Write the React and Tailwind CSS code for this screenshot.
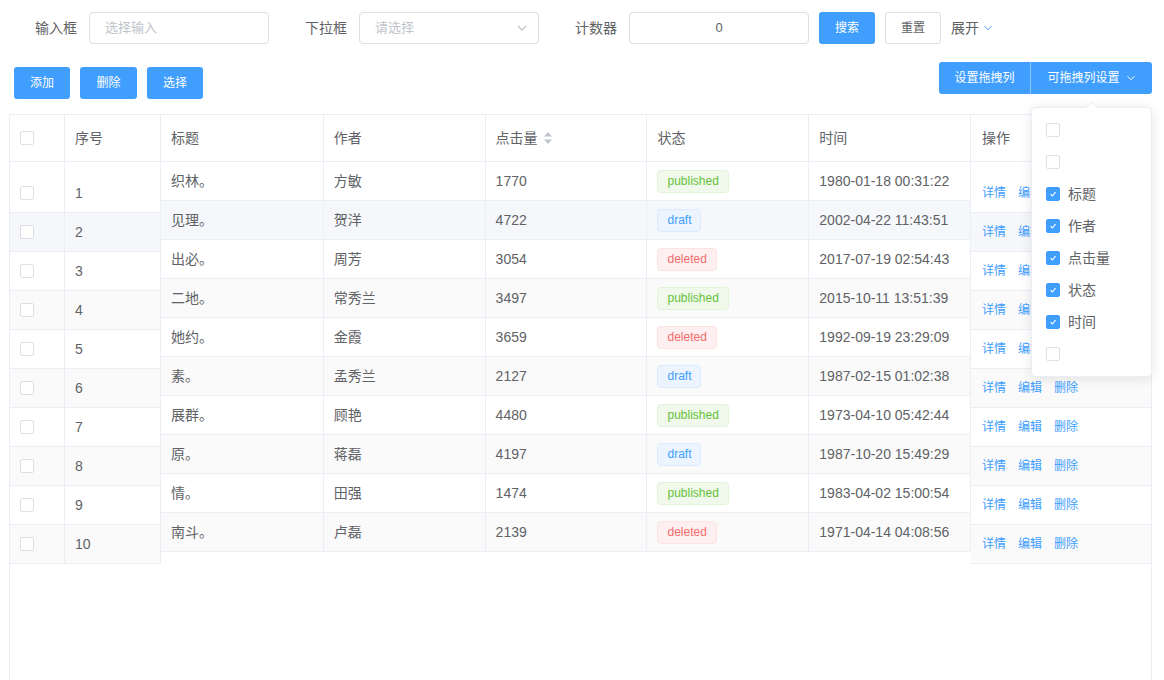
import React from "react";

const rows = [
  { id: 1, title: "织林。", author: "方敏", views: 1770, status: "published", time: "1980-01-18 00:31:22" },
  { id: 2, title: "见理。", author: "贺洋", views: 4722, status: "draft", time: "2002-04-22 11:43:51" },
  { id: 3, title: "出必。", author: "周芳", views: 3054, status: "deleted", time: "2017-07-19 02:54:43" },
  { id: 4, title: "二地。", author: "常秀兰", views: 3497, status: "published", time: "2015-10-11 13:51:39" },
  { id: 5, title: "她约。", author: "金霞", views: 3659, status: "deleted", time: "1992-09-19 23:29:09" },
  { id: 6, title: "素。", author: "孟秀兰", views: 2127, status: "draft", time: "1987-02-15 01:02:38" },
  { id: 7, title: "展群。", author: "顾艳", views: 4480, status: "published", time: "1973-04-10 05:42:44" },
  { id: 8, title: "原。", author: "蒋磊", views: 4197, status: "draft", time: "1987-10-20 15:49:29" },
  { id: 9, title: "情。", author: "田强", views: 1474, status: "published", time: "1983-04-02 15:00:54" },
  { id: 10, title: "南斗。", author: "卢磊", views: 2139, status: "deleted", time: "1971-04-14 04:08:56" },
];

const tagStyles = {
  published: "bg-[#f0f9eb] border-[#e1f3d8] text-[#67c23a]",
  draft: "bg-[#ecf5ff] border-[#d9ecff] text-[#409eff]",
  deleted: "bg-[#fef0f0] border-[#fde2e2] text-[#f56c6c]",
};

const rowBg = (i) => (i === 1 ? "bg-[#f5f7fa]" : i % 2 === 1 ? "bg-[#fafafa]" : "bg-white");

const Check = ({ checked }) =>
  checked ? (
    <span className="inline-flex h-[14px] w-[14px] items-center justify-center rounded-[2px] border border-[#409eff] bg-[#409eff]">
      <svg width="10" height="10" viewBox="0 0 10 10" fill="none">
        <path d="M2.6 5.2 L4.4 7 L7.6 3.2" stroke="white" strokeWidth="1.1" />
      </svg>
    </span>
  ) : (
    <span className="inline-block h-[14px] w-[14px] rounded-[2px] border border-[#dcdfe6] bg-white" />
  );

const Chevron = ({ className }) => (
  <svg className={className} width="10" height="10" viewBox="0 0 10 10" fill="none">
    <path d="M1.5 3.2 L5 6.7 L8.5 3.2" stroke="currentColor" strokeWidth="1" />
  </svg>
);

const Btn = ({ children, className = "" }) => (
  <button className={"h-[32px] rounded-[3px] bg-[#409eff] px-[15px] text-[12px] text-white " + className}>{children}</button>
);

const cell = "flex items-center border-r border-b border-[#ebeef5] px-[10px]";

const SortIcon = () => (
  <svg className="ml-[6px]" width="8" height="14" viewBox="0 0 8 14">
    <path d="M4 1 L8 5.5 L0 5.5 Z" fill="#c0c4cc" />
    <path d="M4 13 L8 8.5 L0 8.5 Z" fill="#c0c4cc" />
  </svg>
);

const Actions = () => (
  <div className="flex gap-[12px] text-[12px] text-[#409eff]">
    <span>详情</span>
    <span>编辑</span>
    <span>删除</span>
  </div>
);

export default function App() {
  return (
    <div className="relative h-[680px] w-[1164px] overflow-hidden bg-white text-[14px] text-[#606266] font-['Liberation_Sans','Noto_Sans_CJK_SC',sans-serif]">
      {/* search form */}
      <div className="flex items-center pt-[12px] pl-[35px]">
        <span>输入框</span>
        <div className="ml-[12px] flex h-[32px] w-[180px] items-center rounded-[4px] border border-[#dcdfe6] px-[15px] text-[13px] text-[#c0c4cc]">选择输入</div>
        <span className="ml-[36px]">下拉框</span>
        <div className="ml-[12px] flex h-[32px] w-[180px] items-center justify-between rounded-[4px] border border-[#dcdfe6] pl-[15px] pr-[10px] text-[13px] text-[#c0c4cc]">
          请选择
          <Chevron className="h-[12px] w-[12px] text-[#c0c4cc]" />
        </div>
        <span className="ml-[36px]">计数器</span>
        <div className="ml-[12px] flex h-[32px] w-[180px] items-center justify-center rounded-[4px] border border-[#dcdfe6] text-[13px]">0</div>
        <Btn className="ml-[10px] w-[56px] px-0">搜索</Btn>
        <button className="ml-[10px] h-[32px] w-[56px] rounded-[3px] border border-[#dcdfe6] bg-white text-[12px] text-[#606266]">重置</button>
        <span className="ml-[10px] flex items-center gap-[4px] text-[#606266]">
          展开
          <Chevron className="h-[10px] w-[10px] text-[#409eff]" />
        </span>
      </div>

      {/* toolbar */}
      <div className="mt-[18px] flex items-start justify-between pl-[14px] pr-[12px]">
        <div className="mt-[5px] flex gap-[10px]">
          <Btn className="w-[56px] px-0">添加</Btn>
          <Btn className="w-[57px] px-0">删除</Btn>
          <Btn className="w-[56px] px-0">选择</Btn>
        </div>
        <div className="flex">
          <button className="h-[32px] w-[92px] rounded-l-[3px] border-r border-r-[#8cc5ff] bg-[#409eff] text-[12px] text-white">设置拖拽列</button>
          <button className="flex h-[32px] w-[121px] items-center justify-center gap-[6px] rounded-r-[3px] bg-[#409eff] text-[12px] text-white">
            可拖拽列设置
            <Chevron className="h-[10px] w-[10px] text-white" />
          </button>
        </div>
      </div>

      {/* table */}
      <div className="relative mt-[15px] ml-[9px] h-[620px] w-[1143px] overflow-hidden border border-[#ebeef5]">
        <div className="flex h-[47px]">
          <div className={cell + " w-[55px]"} />
          <div className={cell + " w-[96px]"}>序号</div>
          <div className={cell + " w-[163px]"}>标题</div>
          <div className={cell + " w-[162px]"}>作者</div>
          <div className={cell + " w-[162px]"}>点击量<SortIcon /></div>
          <div className={cell + " w-[162px]"}>状态</div>
          <div className={cell + " w-[162px]"}>时间</div>
          <div className={cell + " w-[180px]"}>操作</div>
        </div>
        {rows.map((r, i) => (
          <div key={r.id} className={"flex h-[39px] " + rowBg(i)}>
            <div className={cell + " w-[55px]"} />
            <div className={cell + " w-[96px]"}>{r.id}</div>
            <div className={cell + " w-[163px]"}>{r.title}</div>
            <div className={cell + " w-[162px]"}>{r.author}</div>
            <div className={cell + " w-[162px]"}>{r.views}</div>
            <div className={cell + " w-[162px]"}>
              <span className={"flex h-[23px] items-center rounded-[4px] border px-[9px] text-[12px] " + tagStyles[r.status]}>{r.status}</span>
            </div>
            <div className={cell + " w-[162px]"}>{r.time}</div>
            <div className={cell + " w-[180px]"} />
          </div>
        ))}

        {/* fixed left columns */}
        <div className="absolute left-0 top-0 w-[151px]">
          <div className="flex h-[47px] bg-white">
            <div className={cell + " w-[55px]"}><Check /></div>
            <div className={cell + " w-[96px]"}>序号</div>
          </div>
          {rows.map((r, i) => (
            <div key={r.id} className={"flex " + (i === 0 ? "h-[51px] " : "h-[39px] ") + rowBg(i)}>
              <div className={cell + " w-[55px] " + (i === 0 ? "pt-[12px]" : "")}><Check /></div>
              <div className={cell + " w-[96px] " + (i === 0 ? "pt-[12px]" : "")}>{r.id}</div>
            </div>
          ))}
        </div>

        {/* fixed right column */}
        <div className="absolute right-0 top-0 w-[180px]">
          <div className="flex h-[47px] items-center border-b border-[#ebeef5] bg-white px-[11px]">操作</div>
          {rows.map((r, i) => (
            <div key={r.id} className={"flex items-center border-b border-[#ebeef5] px-[11px] " + (i === 0 ? "h-[51px] pt-[12px] " : "h-[39px] ") + rowBg(i)}>
              <Actions />
            </div>
          ))}
        </div>
      </div>

      {/* column settings dropdown */}
      <div className="absolute left-[1031px] top-[107px] w-[121px] rounded-[4px] border border-[#ebeef5] bg-white py-[6px] shadow-[0_2px_12px_0_rgba(0,0,0,0.1)]">
        <span className="absolute -top-[5px] left-[55px] h-[9px] w-[9px] rotate-45 border-l border-t border-[#ebeef5] bg-white" />
        {[
          [false, ""],
          [false, ""],
          [true, "标题"],
          [true, "作者"],
          [true, "点击量"],
          [true, "状态"],
          [true, "时间"],
          [false, ""],
        ].map(([c, label], i) => (
          <div key={i} className="flex h-[32px] items-center gap-[8px] pl-[14px]">
            <Check checked={c} />
            <span>{label}</span>
          </div>
        ))}
      </div>
    </div>
  );
}
